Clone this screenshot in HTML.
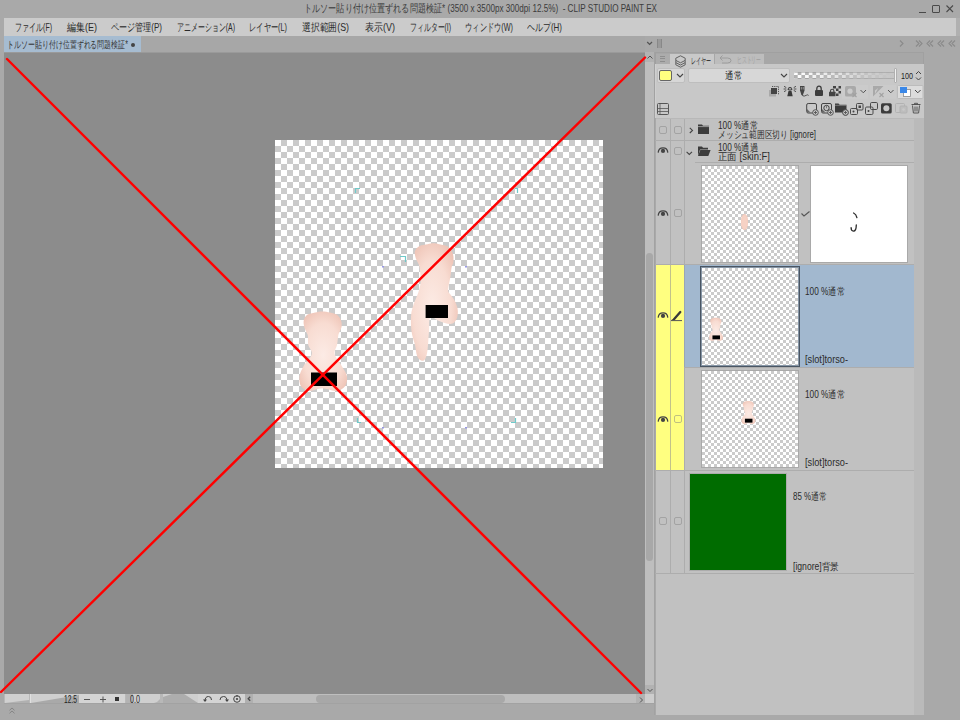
<!DOCTYPE html>
<html><head><meta charset="utf-8">
<style>
*{margin:0;padding:0;box-sizing:border-box}
html,body{width:960px;height:720px;overflow:hidden;background:#a9a9a9;font-family:"Liberation Sans",sans-serif;color:#333;position:relative}
.a{position:absolute}
.t{position:absolute;white-space:nowrap;line-height:1;transform-origin:0 0;width:var(--w,auto);overflow:hidden}
svg{position:absolute;overflow:visible}
.ck6{background:repeating-conic-gradient(#cbcbcb 0 25%,#fff 0 50%) 0 0/12px 12px}
.ck3{background:repeating-conic-gradient(#cbcbcb 0 25%,#fff 0 50%) 0 0/6px 6px}
#menu span{position:absolute;top:4px;font-size:11px;color:#2a2a2a}
.lt{font-size:10px;color:#2b2b2b}
.cb{position:absolute;width:8px;height:8px;border:1px solid #a3a3a3;border-radius:2px}
.vl{position:absolute;width:1px;background:#adadad}
.hl{position:absolute;height:1px;background:#adadad}
</style></head><body>

<!-- ===== title bar ===== -->
<div class="t" style="left:304px;top:3px;font-size:11px;color:#3c3c3c;--w:353px">トルソー貼り付け位置ずれる問題検証* (3500 x 3500px 300dpi 12.5%)&nbsp; - CLIP STUDIO PAINT EX</div>
<div class="a" style="left:919px;top:12px;width:7px;height:1px;background:#4a4a4a"></div>
<div class="a" style="left:932px;top:5px;width:8px;height:8px;border:1px solid #4a4a4a;border-radius:1px"></div>
<svg style="left:946px;top:5px" width="8" height="8"><path d="M0.5 0.5L7 7M7 0.5L0.5 7" stroke="#4a4a4a" stroke-width="1.1"/></svg>

<!-- ===== menu ===== -->
<div class="a" id="menu" style="left:4px;top:18px;width:952px;height:18px;background:#cbcbcb">
<span class="t" style="left:11px;--w:37px">ファイル(F)</span>
<span class="t" style="left:63px;--w:30px">編集(E)</span>
<span class="t" style="left:107px;--w:51px">ページ管理(P)</span>
<span class="t" style="left:173px;--w:58px">アニメーション(A)</span>
<span class="t" style="left:245px;--w:38px">レイヤー(L)</span>
<span class="t" style="left:298px;--w:47px">選択範囲(S)</span>
<span class="t" style="left:361px;--w:30px">表示(V)</span>
<span class="t" style="left:406px;--w:41px">フィルター(I)</span>
<span class="t" style="left:461px;--w:48px">ウィンドウ(W)</span>
<span class="t" style="left:523px;--w:35px">ヘルプ(H)</span>
</div>
<div class="a" style="left:956px;top:18px;width:4px;height:18px;background:#b0b0b0"></div>

<!-- ===== doc tab row ===== -->
<div class="a" style="left:4px;top:36px;width:641px;height:16px;background:#a7a7a7"></div>
<div class="a" style="left:4px;top:36px;width:137px;height:16px;background:#a6bcd1">
  <span class="t" style="left:3px;top:4px;font-size:10px;color:#333;--w:121px">トルソー貼り付け位置ずれる問題検証*</span>
  <span class="a" style="left:127px;top:7px;width:4px;height:4px;border-radius:50%;background:#444"></span>
</div>
<svg style="left:646px;top:41px" width="8" height="5"><path d="M1.2 1L3.6 3.4L6 1" fill="none" stroke="#555" stroke-width="1.3"/></svg>
<div class="a" style="left:657px;top:39px;width:5px;height:9px;border-left:1px solid #888;border-right:1px solid #888;background:#999"></div>
<svg style="left:899px;top:40px" width="60" height="8"><g fill="none" stroke="#8a8a8a" stroke-width="1.1"><path d="M1 0.5L4 3.5L1 6.5"/><path d="M17 0.5L20 3.5L17 6.5M20 0.5L23 3.5L20 6.5"/><path d="M31 0.5L28 3.5L31 6.5M34 0.5L31 3.5L34 6.5"/><path d="M42 0.5L39 3.5L42 6.5M45 0.5L42 3.5L45 6.5"/><path d="M53 0.5L50 3.5L53 6.5M56 0.5L53 3.5L56 6.5"/></g></svg>

<!-- ===== canvas area ===== -->
<div class="a" style="left:4px;top:52px;width:641px;height:642px;background:#8c8c8c"></div>
<div class="a" style="left:4px;top:52px;width:641px;height:1px;background:#9a9a9a"></div>
<div class="a ck6" style="left:275px;top:140px;width:328px;height:328px"></div>
<svg style="left:275px;top:140px" width="328" height="328" viewBox="0 0 328 328">
  <defs>
    <radialGradient id="sk" cx="0.5" cy="0.55" r="0.62"><stop offset="0" stop-color="#fcebe5"/><stop offset="0.65" stop-color="#f8dcd2"/><stop offset="1" stop-color="#eec3b5"/></radialGradient>
    <radialGradient id="sk2" cx="0.45" cy="0.55" r="0.62"><stop offset="0" stop-color="#fcebe5"/><stop offset="0.65" stop-color="#f8dcd2"/><stop offset="1" stop-color="#eec3b5"/></radialGradient>
  </defs>
  <!-- figure 1 -->
  <g id="fig1"><path d="M47.1 171.4C49.6 171.4 52.6 171.9 55.1 172.5C57.6 173.1 60.2 173.5 62.0 174.8C63.8 176.1 65.1 178.3 65.9 180.3C66.7 182.3 66.9 184.7 66.6 186.7C66.3 188.7 64.9 190.9 64.3 192.5C63.7 194.0 63.5 193.8 63.2 195.9C62.8 198.0 62.6 202.0 62.0 205.1C61.4 208.1 58.9 210.8 59.7 214.2C60.5 217.7 64.6 222.1 66.6 225.7C68.6 229.3 71.3 232.6 71.9 236.0C72.4 239.5 71.9 243.9 70.0 246.3C68.2 248.8 64.7 250.6 60.9 250.9C57.0 251.2 51.5 248.2 47.1 248.2C42.7 248.2 38.0 251.2 34.5 250.9C31.0 250.6 27.6 248.8 26.0 246.3C24.4 243.9 24.2 239.5 24.6 236.0C25.1 232.6 26.7 229.3 28.8 225.7C30.8 222.1 36.0 217.7 36.8 214.2C37.5 210.8 34.0 208.1 33.3 205.1C32.7 202.0 33.2 198.0 32.9 195.9C32.6 193.8 32.1 194.0 31.5 192.5C30.9 190.9 29.7 188.7 29.2 186.7C28.8 184.7 28.3 182.3 28.8 180.3C29.3 178.3 30.3 176.1 32.2 174.8C34.1 173.5 37.7 173.1 40.2 172.5C42.7 171.9 44.6 171.4 47.1 171.4Z" fill="url(#sk)"/>
  <rect x="36" y="232.5" width="26" height="13.5" fill="#000"/></g>
  <!-- figure 2 -->
  <path d="M158.3 103.3C160.2 103.3 161.9 103.8 164.0 104.2C166.1 104.6 169.0 105.0 170.9 105.8C172.8 106.5 174.3 107.1 175.5 108.8C176.7 110.4 177.8 113.3 178.3 115.6C178.7 117.9 178.5 120.6 178.3 122.5C178.0 124.4 177.1 124.8 176.7 127.1C176.2 129.4 176.1 132.5 175.5 136.3C174.9 140.1 173.2 147.0 173.2 150.0C173.2 153.1 174.4 152.7 175.5 154.6C176.7 156.5 178.9 158.8 180.1 161.5C181.3 164.2 182.7 167.6 182.8 170.7C183.0 173.7 182.5 177.6 181.2 179.8C180.0 182.1 178.4 183.8 175.5 184.0C172.6 184.2 167.4 182.1 164.0 181.0C160.7 179.9 157.0 175.8 155.3 177.5C153.6 179.3 154.4 186.0 154.0 191.3C153.5 196.7 153.2 205.1 152.6 209.6C152.0 214.2 151.2 217.0 150.3 218.8C149.3 220.7 148.2 221.0 146.8 220.7C145.5 220.3 143.4 219.1 142.3 216.5C141.1 213.9 140.9 209.3 140.0 205.1C139.0 200.9 137.2 196.3 136.5 191.3C135.9 186.3 135.7 179.8 136.1 175.3C136.5 170.7 137.6 167.6 138.8 163.8C140.0 160.0 142.3 156.1 143.4 152.3C144.6 148.5 145.5 145.1 145.7 140.9C145.9 136.7 144.9 130.0 144.6 127.1C144.2 124.2 144.1 125.2 143.4 123.7C142.8 122.1 141.2 120.0 140.7 117.9C140.1 115.8 139.3 113.0 140.0 111.1C140.6 109.1 142.5 107.2 144.6 106.0C146.7 104.9 150.3 104.6 152.6 104.2C154.9 103.7 156.4 103.3 158.3 103.3Z" fill="url(#sk2)"/>
  <rect x="150.6" y="165" width="22.4" height="13" fill="#000"/>
  <!-- small markers -->
  <g fill="none" stroke="#6fcaca" stroke-width="1.2"><path d="M80 48.5h5M80.5 48v5"/><path d="M242.5 48v5M240 48.5h2.5"/><path d="M125 116.5h6M130.5 116v6"/><path d="M82.5 278v5M82 282.5h4"/><path d="M240.5 278v5M236 282.5h5"/></g>
  <g fill="#9898e6"><rect x="107" y="126" width="2" height="1.5"/><rect x="190" y="126" width="2" height="1.5"/><rect x="107" y="287" width="2" height="1.5"/><rect x="190" y="287" width="2" height="1.5"/></g>
</svg>

<!-- ===== scrollbars ===== -->
<div class="a" style="left:645px;top:52px;width:9px;height:642px;background:#bebebe"></div>
<div class="a" style="left:654px;top:52px;width:1px;height:663px;background:#a2a2a2"></div>
<div class="a" style="left:645px;top:52px;width:9px;height:10px;background:#b2b2b2"></div>
<svg style="left:646px;top:55px" width="8" height="5"><path d="M1.5 3.5L4 1L6.5 3.5" fill="none" stroke="#555" stroke-width="1"/></svg>
<div class="a" style="left:646px;top:253px;width:7px;height:308px;background:#a8a8a8;border-radius:4px"></div>
<div class="a" style="left:645px;top:685px;width:9px;height:9px;background:#b2b2b2"></div>
<svg style="left:646px;top:688px" width="8" height="5"><path d="M1.5 1L4 3.5L6.5 1" fill="none" stroke="#555" stroke-width="1"/></svg>

<div class="a" style="left:253px;top:694px;width:383px;height:9px;background:#bebebe"></div>
<div class="a" style="left:316px;top:695px;width:189px;height:8px;background:#a8a8a8;border-radius:4px"></div>
<div class="a" style="left:636px;top:694px;width:9px;height:9px;background:#b2b2b2"></div>
<svg style="left:639px;top:696px" width="5" height="8"><path d="M1 1.5L3.5 4L1 6.5" fill="none" stroke="#555" stroke-width="1"/></svg>
<div class="a" style="left:645px;top:694px;width:9px;height:9px;background:#cdcdcd"></div>

<!-- ===== bottom toolbar ===== -->
<div class="a" style="left:4px;top:694px;width:249px;height:9px;background:#b8b8b8"></div>
<svg style="left:4px;top:694px" width="249" height="9">
  <rect x="1" y="0" width="24" height="9" fill="#d0d0d0"/><path d="M1 9L25 6V9Z" fill="#b0b0b0"/>
  <rect x="26" y="0" width="1" height="9" fill="#e0e0e0"/>
  <rect x="27" y="0" width="48" height="9" fill="#cfcfcf"/><path d="M27 9L75 1V9Z" fill="#a9a9a9"/>
  <rect x="75" y="0" width="46" height="9" fill="#d4d4d4"/>
  <path d="M80 5.5h6M96 5.5h6M99 2.5v6" stroke="#555" stroke-width="1"/><rect x="111" y="3" width="4" height="4" fill="#333"/>
  <rect x="122" y="0" width="34" height="9" fill="#cfcfcf"/><path d="M122 9V0H129V9Z" fill="#b3b3b3"/><path d="M150 9Q154 8 156 5V9Z" fill="#b3b3b3"/>
  <rect x="159" y="0" width="35" height="9" fill="#cfcfcf"/><path d="M159 9V3L168 0H180L194 9Z" fill="#adadad"/>
  <rect x="194" y="0" width="47" height="9" fill="#d4d4d4"/>
  <g fill="none" stroke="#444" stroke-width="1"><path d="M201 7Q201 2.5 204.5 2.5Q207.5 2.5 207.5 6"/><path d="M216 6Q216 2.5 219.5 2.5Q223 2.5 223 7"/><circle cx="233" cy="5" r="3.3"/></g>
  <path d="M199 5.5L201 8L203 5.5Z" fill="#444"/><path d="M221 5.5L223 8L225 5.5Z" fill="#444"/><circle cx="233" cy="5" r="1.1" fill="#444"/><path d="M233 1v2" stroke="#444"/>
  <rect x="241" y="0" width="8" height="9" fill="#b0b0b0"/><path d="M246.2 2.8L244.2 4.8L246.2 6.8" fill="none" stroke="#4a4a4a" stroke-width="1.3"/>
</svg>
<span class="t" style="left:64px;top:695px;font-size:10px;color:#222;--w:13px">12.5</span>
<span class="t" style="left:130px;top:695px;font-size:10px;color:#2a2a2a;--w:10px">0.0</span>
<div class="a" style="left:4px;top:703px;width:650px;height:1px;background:#a2a2a2"></div>
<svg style="left:9px;top:707px" width="7" height="7"><path d="M0.5 3.3L3 1L5.5 3.3M0.5 6.3L3 4L5.5 6.3" fill="none" stroke="#858585" stroke-width="1"/></svg>

<!-- red cross -->
<svg style="left:0;top:0" width="960" height="720"><g stroke="#ff0000" stroke-width="2.45" stroke-linecap="round"><path d="M7 59L641 693"/><path d="M645 57.5L1 692"/></g></svg>

<!-- ===== layer panel ===== -->
<div class="a" style="left:655px;top:52px;width:269px;height:663px;background:#a7a7a7;border:1px solid #a0a0a0"></div>
<div class="a" style="left:656px;top:54px;width:14px;height:10px;background:#acacac"></div>
<div class="a" style="left:660px;top:56px;width:5px;height:1px;background:#8e8e8e;box-shadow:0 2px 0 #8e8e8e,0 5px 0 #8e8e8e"></div>
<div class="a" style="left:670px;top:54px;width:44px;height:11px;background:#c9c9c9"></div>
<div class="a" style="left:715px;top:54px;width:49px;height:10px;background:#bdbdbd"></div>
<svg style="left:719px;top:55px" width="14" height="9"><path d="M3.5 0.5L1 3L3.5 5.5M1 3H8.5Q12 3 12 5.5Q12 8 8.5 8H3" fill="none" stroke="#9c9c9c" stroke-width="1"/></svg>
<span class="t" style="left:737px;top:56px;font-size:9px;color:#a3a3a3;--w:24px">ヒストリー</span>
<div class="a" style="left:655px;top:64px;width:269px;height:651px;background:#c8c8c8;border-left:1px solid #cfcfcf;border-bottom:1px solid #bdbdbd"></div>
<svg style="left:675px;top:55px" width="11" height="13"><g fill="none" stroke="#555" stroke-width="0.9"><path d="M5.5 0.8L10.2 3.2V5.4L5.5 7.8L0.8 5.4V3.2Z"/><path d="M0.8 5.4V7.6L5.5 10L10.2 7.6V5.4"/><path d="M0.8 7.6V9.8L5.5 12.2L10.2 9.8V7.6"/></g></svg>
<span class="t" style="left:691px;top:57px;font-size:9px;color:#333;--w:20px">レイヤー</span>

<!-- row A -->
<div class="a" style="left:657px;top:68px;width:28px;height:15px;background:#d7d7d7;border:1px solid #bebebe;border-radius:2px"></div>
<div class="a" style="left:659px;top:70px;width:13px;height:11px;background:#ffff80;border:1px solid #666;border-radius:2px"></div>
<svg style="left:676px;top:73px" width="8" height="5"><path d="M1 1L4 4L7 1" fill="none" stroke="#444" stroke-width="1.1"/></svg>
<div class="a" style="left:688px;top:68px;width:102px;height:15px;background:#d7d7d7;border:1px solid #bebebe;border-radius:2px"></div>
<span class="t" style="left:725px;top:71px;font-size:10px;color:#222;--w:17px">通常</span>
<svg style="left:780px;top:73px" width="8" height="5"><path d="M1 1L4 4L7 1" fill="none" stroke="#444" stroke-width="1.1"/></svg>
<div class="a" style="left:794px;top:72px;width:101px;height:7px;border-radius:1px;background:linear-gradient(90deg,rgba(198,198,198,0) 5%,rgba(198,198,198,.85) 75%,#c6c6c6),repeating-conic-gradient(#b2b2b2 0 25%,#fdfdfd 0 50%) 0 0/7.4px 6px;box-shadow:inset 0 1px 0 rgba(150,150,150,.5),inset 0 -1px 0 rgba(150,150,150,.5)"></div>
<div class="a" style="left:894px;top:68px;width:3px;height:15px;background:#f0f0f0;border:1px solid #b0b0b0;border-radius:1px"></div>
<span class="t" style="left:901px;top:72px;font-size:9px;color:#222;--w:12px">100</span>
<svg style="left:915px;top:70px" width="7" height="12"><path d="M1 4L3.5 1.5L6 4M1 7.5L3.5 10L6 7.5" fill="none" stroke="#444" stroke-width="1"/></svg>

<!-- row B icons -->
<svg style="left:765px;top:83px" width="160" height="18">
  <!-- clip -->
  <rect x="4" y="7" width="7" height="6.5" fill="#a9a9a9"/><rect x="6" y="5" width="6" height="6" fill="#444"/>
  <path d="M7 3.5h6.5M13.5 3.5v8" stroke="#555" stroke-width="1" stroke-dasharray="1.2 1"/>
  <!-- lighthouse -->
  <path d="M22.3 13.2L23.6 7.6H26.4L27.7 13.2Z" fill="#3a3a3a"/><path d="M22.6 7Q22.8 4 25 4Q27.2 4 27.4 7Z" fill="#3a3a3a"/><rect x="23.8" y="5.2" width="2.4" height="1.3" fill="#bbb"/>
  <path d="M18.6 6h2.6M28.8 6h2.6M19 3.3l2.3 1.3M31 3.3l-2.3 1.3M19 8.7l2.3-1.3M31 8.7l-2.3-1.3" stroke="#444" stroke-width="0.9"/>
  <!-- draft -->
  <path d="M35 3h4.5v4.5l-1.5 4.2q-0.8 1.2-1.6 0L35 7.5Z" fill="#444"/><path d="M36.3 4v2.5M38.2 4v2.5" stroke="#bbb" stroke-width="0.7"/>
  <path d="M37 11.5q0.5 2 2.5 1.5q2-0.8 3-1.2q1 0.3 1 0.8" fill="none" stroke="#444" stroke-width="0.9"/>
  <!-- lock -->
  <path d="M51.8 7.5V5.8q0-2.6 2.2-2.6t2.2 2.6v1.7" fill="none" stroke="#3c3c3c" stroke-width="1.3"/><rect x="50" y="7" width="8" height="6" rx="1" fill="#3c3c3c"/>
  <!-- checker lock -->
  <rect x="68" y="3" width="3" height="2.5" fill="#444"/><rect x="71" y="5.5" width="2.5" height="2.5" fill="#444"/><rect x="73.5" y="3" width="2.5" height="2.5" fill="#444"/><rect x="73.5" y="8" width="2.5" height="2.5" fill="#444"/><rect x="71" y="10.5" width="2.5" height="2.5" fill="#444"/>
  <path d="M65.5 9V8q0-1.7 1.7-1.7t1.7 1.7v1" fill="none" stroke="#444" stroke-width="1.1"/><rect x="64" y="8.8" width="6.5" height="4.5" rx="0.5" fill="#444"/>
  <!-- disabled 1 -->
  <rect x="77" y="2" width="26" height="13.5" fill="#cbcbcb"/>
  <path d="M81.5 3h7.5q2 0 2 2v7q0 1.5-1.5 1.5h-8q-1.5 0-1.5-1.5V5q0-2 1.5-2Z" fill="#a9a9a9"/><circle cx="85" cy="8.2" r="2.6" fill="#cbcbcb"/>
  <path d="M87.5 10l4 4M91.5 10l-4 4" stroke="#a2a2a2" stroke-width="1.1"/>
  <path d="M95.5 7l2.8 2.8L101 7" fill="none" stroke="#555" stroke-width="1"/>
  <!-- disabled 2 -->
  <rect x="105" y="2" width="26" height="13.5" fill="#cbcbcb"/>
  <path d="M108 13.5V3h10.5Z" fill="#a9a9a9"/><path d="M110 11V7.5l3.2-2.5z" fill="#cbcbcb"/>
  <path d="M114.5 10l4 4M118.5 10l-4 4" stroke="#a2a2a2" stroke-width="1.1"/>
  <path d="M123 7l2.8 2.8L128.5 7" fill="none" stroke="#555" stroke-width="1"/>
  <!-- color widget -->
  <rect x="132.5" y="2.5" width="25.5" height="13" fill="#dcdcdc" stroke="#bcbcbc" rx="1"/>
  <rect x="138.5" y="6.5" width="7" height="7" fill="#fff" stroke="#8a8a8a" stroke-width="0.8"/><rect x="135" y="4" width="7" height="6" fill="#3b88e8"/>
  <path d="M150 7l2.8 2.8L155.6 7" fill="none" stroke="#444" stroke-width="1"/>
</svg>

<!-- row C icons -->
<svg style="left:657px;top:103px" width="12" height="12"><rect x="0.5" y="0.5" width="11" height="11" rx="1" fill="none" stroke="#555"/><path d="M0.5 5.5h11M0.5 8.5h11M3 0.5v11" stroke="#555" stroke-width="0.8"/></svg>
<svg style="left:802px;top:99px" width="124" height="18">
  <g fill="none" stroke="#444" stroke-width="1">
    <rect x="4.7" y="4.5" width="9.8" height="9.5" rx="1.5"/>
    <rect x="19.5" y="4.5" width="10" height="9.5" rx="1.5"/><circle cx="24.5" cy="9" r="2.7"/>
  </g>
  <path d="M5 10v3.5h3.5Z" fill="#666"/><path d="M20 10v3.5h3.5Z" fill="#666"/><path d="M24.5 6.3v3" stroke="#666" stroke-width="0.8"/>
  <g fill="#c8c8c8" stroke="#555" stroke-width="1"><circle cx="13.5" cy="13.5" r="2.8"/><circle cx="28.5" cy="13.5" r="2.8"/><circle cx="43.5" cy="13.5" r="2.8"/></g>
  <path d="M13.5 12v3M12 13.5h3M28.5 12v3M27 13.5h3M43.5 12v3M42 13.5h3" stroke="#555" stroke-width="0.9"/>
  <path d="M33 4.5h3.5l1.2 1.2h6.8v7.8h-11.5Z" fill="#3c3c3c"/><path d="M33 6.3h11.5" stroke="#aaa" stroke-width="0.6"/>
  <g fill="#c8c8c8" stroke="#555" stroke-width="1"><circle cx="43.5" cy="13.5" r="2.8"/></g><path d="M43.5 12v3M42 13.5h3" stroke="#555" stroke-width="0.9"/>
  <g fill="none" stroke="#4a4a4a" stroke-width="1">
    <rect x="48.5" y="9.5" width="7" height="6" rx="1"/><rect x="54.5" y="4.5" width="6.5" height="6.5" rx="1"/>
    <rect x="63.5" y="8" width="7.5" height="7.5" rx="1.2"/><rect x="68.5" y="3.5" width="7" height="7" rx="1.2"/>
  </g>
  <rect x="56.5" y="6.5" width="2.5" height="2.5" fill="#444"/><circle cx="51.5" cy="12.5" r="1" fill="#444"/><circle cx="66.5" cy="12" r="1" fill="#444"/>
  <rect x="79" y="4.2" width="10.7" height="10.3" rx="1.5" fill="#3c3c3c"/><circle cx="84.35" cy="9.35" r="3" fill="#c8c8c8"/>
  <g fill="none" stroke="#b2b2b2" stroke-width="1"><rect x="93.5" y="4.5" width="9" height="9" rx="1"/><rect x="98" y="7" width="7" height="7" rx="1" fill="#bdbdbd"/></g><circle cx="101.5" cy="10.5" r="1.3" fill="#c8c8c8"/>
  <g fill="none" stroke="#555" stroke-width="1"><path d="M109.5 5.5h9M112.5 5.5v-1.2h3v1.2M110.5 6.5l0.9 7.5h5.2l0.9-7.5M113 7.5v5M115 7.5v5"/></g>
</svg>

<!-- ===== layer list ===== -->
<div class="a" style="left:655px;top:118px;width:259px;height:597px;background:#c1c1c1"></div>
<div class="a" style="left:914px;top:118px;width:10px;height:597px;background:#bababa"></div>
<div class="hl" style="left:655px;top:118px;width:259px;background:#b8b8b8"></div>
<div class="a" style="left:655px;top:118px;width:1px;height:597px;background:#a9a9a9"></div>
<!-- column lines -->
<div class="vl" style="left:670px;top:119px;height:454px"></div>
<div class="vl" style="left:684px;top:119px;height:454px"></div>

<!-- row 1 folder -->
<div class="cb" style="left:659px;top:126px"></div>
<div class="cb" style="left:674px;top:126px"></div>
<svg style="left:689px;top:127px" width="5" height="7"><path d="M0.8 0.8L3.5 3.4L0.8 6" fill="none" stroke="#444" stroke-width="1.1"/></svg>
<svg style="left:698px;top:124px" width="11" height="10"><path d="M0 0.5h4l1 1.2h6v8.3h-11z" fill="#3c3c3c"/><path d="M0 2.6h11" stroke="#bdbdbd" stroke-width="0.7"/></svg>
<span class="t lt" style="left:718px;top:121px;--w:40px">100 %通常</span>
<span class="t lt" style="left:718px;top:130px;--w:98px">メッシュ範囲区切り [ignore]</span>
<div class="hl" style="left:655px;top:140px;width:259px"></div>

<!-- row 2 folder open -->
<svg style="left:657px;top:147px" width="12" height="7"><path d="M1.2 5.6Q1.6 0.9 6 0.9Q10.4 0.9 10.8 5.6" fill="none" stroke="#444" stroke-width="1.3"/><circle cx="6" cy="3.9" r="2.1" fill="#444"/></svg>
<div class="cb" style="left:674px;top:147px"></div>
<svg style="left:686px;top:151px" width="7" height="5"><path d="M0.6 0.8L3.3 3.5L6 0.8" fill="none" stroke="#444" stroke-width="1.1"/></svg>
<svg style="left:698px;top:146px" width="13" height="11"><path d="M0 0.5h4l1 1.2h5v1.8h-8l-2 6.5z" fill="#3c3c3c"/><path d="M2.3 4h10.3l-2.3 6h-10.3z" fill="#3c3c3c"/></svg>
<span class="t lt" style="left:718px;top:143px;--w:40px">100 %通過</span>
<span class="t lt" style="left:718px;top:152px;--w:52px">正面 [skin:F]</span>
<div class="hl" style="left:695px;top:162px;width:219px"></div>

<!-- row 3 layer with mask -->
<svg style="left:657px;top:210px" width="12" height="7"><path d="M1.2 5.6Q1.6 0.9 6 0.9Q10.4 0.9 10.8 5.6" fill="none" stroke="#444" stroke-width="1.3"/><circle cx="6" cy="3.9" r="2.1" fill="#444"/></svg>
<div class="cb" style="left:674px;top:209px"></div>
<div class="a ck3" style="left:701px;top:165px;width:98px;height:98px;border:1px solid #a9a9a9"></div>
<div class="a" style="left:741px;top:214px;width:7px;height:16px;border-radius:50%;background:#f6d2c5;box-shadow:inset 0 0 1px #eab2a0"></div>
<svg style="left:801px;top:211px" width="9" height="6"><path d="M0.5 2.5L3 5L8.5 0.5" fill="none" stroke="#555" stroke-width="1.1"/></svg>
<div class="a" style="left:810px;top:165px;width:98px;height:98px;background:#fff;border:1px solid #a9a9a9"></div>
<svg style="left:849px;top:211px" width="10" height="22"><path d="M4.6 2Q7.2 3.3 7.9 6.6M2.1 16.6Q2 20 4.4 20.1Q7.2 20.2 7.3 14" fill="none" stroke="#2a2a2a" stroke-width="1.3" stroke-linecap="round"/></svg>

<!-- row 4 selected -->
<div class="hl" style="left:655px;top:264px;width:259px"></div>
<div class="a" style="left:656px;top:265px;width:28px;height:205px;background:#ffff80"></div>
<div class="a" style="left:670px;top:265px;width:1px;height:205px;background:#c2c28a"></div>
<div class="a" style="left:684px;top:265px;width:230px;height:102px;background:#a2b8cf"></div>
<div class="a" style="left:684px;top:265px;width:1px;height:102px;background:#9aa6b4"></div>
<div class="a" style="left:684px;top:367px;width:1px;height:103px;background:#adadad"></div>
<svg style="left:657px;top:312px" width="12" height="7"><path d="M1.2 5.6Q1.6 0.9 6 0.9Q10.4 0.9 10.8 5.6" fill="none" stroke="#444" stroke-width="1.3"/><circle cx="6" cy="3.9" r="2.1" fill="#444"/></svg>
<svg style="left:670px;top:310px" width="13" height="12"><path d="M4 9.3L10.3 2" stroke="#3a3a3a" stroke-width="2.3" stroke-linecap="round"/><path d="M3 9.5L1.6 10.6" stroke="#3a3a3a" stroke-width="1.2"/><path d="M1 10.6H12" stroke="#555" stroke-width="1"/></svg>
<div class="a ck3" style="left:700px;top:266px;width:100px;height:101px;border:1px solid #4a5664;box-shadow:inset 0 0 0 1px #8796a6;background-position:1px 1px"></div>
<svg style="left:702px;top:268px" width="95" height="96"><use href="#fig1" transform="scale(0.29)"/></svg>
<span class="t lt" style="left:805px;top:287px;--w:40px">100 %通常</span>
<span class="t lt" style="left:805px;top:355px;--w:43px">[slot]torso-</span>

<!-- row 5 -->
<svg style="left:657px;top:416px" width="12" height="7"><path d="M1.2 5.6Q1.6 0.9 6 0.9Q10.4 0.9 10.8 5.6" fill="none" stroke="#444" stroke-width="1.3"/><circle cx="6" cy="3.9" r="2.1" fill="#444"/></svg>
<div class="cb" style="left:674px;top:415px;border-color:#c0c080"></div>
<div class="hl" style="left:684px;top:367px;width:230px"></div>
<div class="a ck3" style="left:701px;top:370px;width:98px;height:98px;border:1px solid #a9a9a9"></div>
<svg style="left:702px;top:371px" width="95" height="95"><use href="#fig1" transform="scale(0.29) translate(112 -68)"/></svg>
<span class="t lt" style="left:805px;top:390px;--w:40px">100 %通常</span>
<span class="t lt" style="left:805px;top:458px;--w:43px">[slot]torso-</span>
<div class="hl" style="left:655px;top:470px;width:259px"></div>

<!-- row 6 background -->
<div class="cb" style="left:659px;top:517px"></div>
<div class="cb" style="left:674px;top:517px"></div>
<div class="a" style="left:689px;top:473px;width:98px;height:98px;background:#006c00;border:1px solid #acacac"></div>
<span class="t lt" style="left:793px;top:492px;--w:34px">85 %通常</span>
<span class="t lt" style="left:793px;top:562px;--w:46px">[ignore]背景</span>
<div class="hl" style="left:655px;top:573px;width:259px"></div>

<script>
(function(){
  var els=document.querySelectorAll('.t');
  for(var i=0;i<els.length;i++){
    var el=els[i];
    var w=parseFloat(getComputedStyle(el).getPropertyValue('--w'));
    if(!w)continue;
    el.style.width='auto';el.style.overflow='visible';
    var r=el.getBoundingClientRect().width;
    if(r>0){el.style.transform='scaleX('+(w/r)+')';}
  }
})();
</script>
</body></html>
